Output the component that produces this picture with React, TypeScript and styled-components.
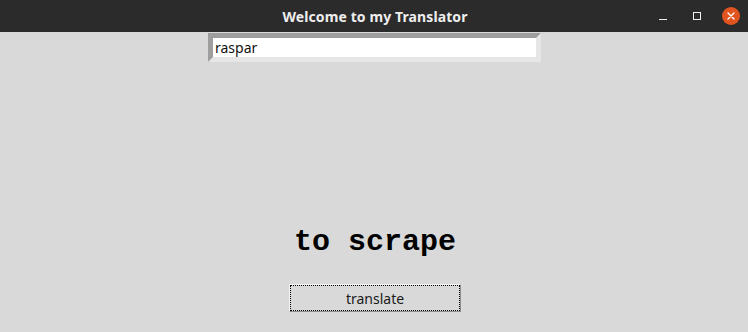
import React from 'react';
import styled, { createGlobalStyle } from 'styled-components';

const GlobalStyle = createGlobalStyle`
  html, body {
    margin: 0;
    padding: 0;
    background: #d9d9d9;
  }
`;

const Window = styled.div`
  width: 748px;
  height: 332px;
  display: flex;
  flex-direction: column;
  background: #d9d9d9;
  overflow: hidden;
`;

const TitleBar = styled.header`
  height: 32px;
  flex-shrink: 0;
  background: #2b2b2b;
  display: grid;
  grid-template-columns: 1fr auto 1fr;
  align-items: center;
`;

const Title = styled.h1`
  grid-column: 2;
  margin: 0 0 0 2px;
  font-family: 'Noto Sans', 'DejaVu Sans', sans-serif;
  font-size: 14px;
  font-weight: 700;
  color: #eeeeee;
  letter-spacing: 0.1px;
`;

const Controls = styled.div`
  grid-column: 3;
  justify-self: end;
  display: flex;
  align-items: center;
  gap: 16px;
  padding-right: 8px;
`;

const CtrlButton = styled.span<{ $close?: boolean }>`
  width: 18px;
  height: 18px;
  border-radius: 50%;
  display: flex;
  align-items: center;
  justify-content: center;
  background: ${p => (p.$close ? '#e2541f' : 'transparent')};
  color: #f2f2f2;
`;

const Content = styled.main`
  flex: 1;
  display: flex;
  flex-direction: column;
  align-items: center;
`;

const Entry = styled.input`
  box-sizing: border-box;
  width: 333px;
  height: 29px;
  margin: 1px 0 0 1px;
  padding: 0 0 0 2px;
  border-style: solid;
  border-width: 5px;
  border-color: #9e9e9e #e6e6e6 #e6e6e6 #9e9e9e;
  background: #ffffff;
  font-family: 'Noto Sans', 'DejaVu Sans', sans-serif;
  font-size: 14px;
  color: #111111;
  outline: none;
`;

const Result = styled.div`
  margin-top: 163px;
  margin-left: 2px;
  font-family: 'Liberation Mono', 'Courier New', monospace;
  font-weight: 700;
  font-size: 30px;
  line-height: 34px;
  color: #000000;
  white-space: pre;
`;

const TranslateButton = styled.button`
  box-sizing: border-box;
  margin-top: 25px;
  margin-left: 2px;
  width: 172px;
  height: 28px;
  padding: 0;
  border-style: solid;
  border-width: 1px;
  border-color: #f4f4f4 #8c8c8c #8c8c8c #f4f4f4;
  background: #d9d9d9;
  outline: 1px dotted #000000;
  outline-offset: -2px;
  font-family: 'Noto Sans', 'DejaVu Sans', sans-serif;
  font-size: 14px;
  color: #1a1a1a;
`;

const App: React.FC = () => {
  return (
    <>
      <GlobalStyle />
      <Window>
        <TitleBar>
          <Title>Welcome to my Translator</Title>
          <Controls>
            <CtrlButton>
              <svg width="10" height="10" viewBox="0 0 10 10">
                <line x1="1" y1="8.5" x2="9" y2="8.5" stroke="#f0f0f0" strokeWidth="1" />
              </svg>
            </CtrlButton>
            <CtrlButton>
              <svg width="10" height="10" viewBox="0 0 10 10">
                <rect x="1.5" y="1.5" width="7" height="7" fill="none" stroke="#f0f0f0" strokeWidth="1" />
              </svg>
            </CtrlButton>
            <CtrlButton $close>
              <svg width="10" height="10" viewBox="0 0 10 10">
                <path d="M2 2 L8 8 M8 2 L2 8" stroke="#ffffff" strokeWidth="1.4" strokeLinecap="round" />
              </svg>
            </CtrlButton>
          </Controls>
        </TitleBar>
        <Content>
          <Entry defaultValue="raspar" />
          <Result>to scrape</Result>
          <TranslateButton>translate</TranslateButton>
        </Content>
      </Window>
    </>
  );
};

export default App;
